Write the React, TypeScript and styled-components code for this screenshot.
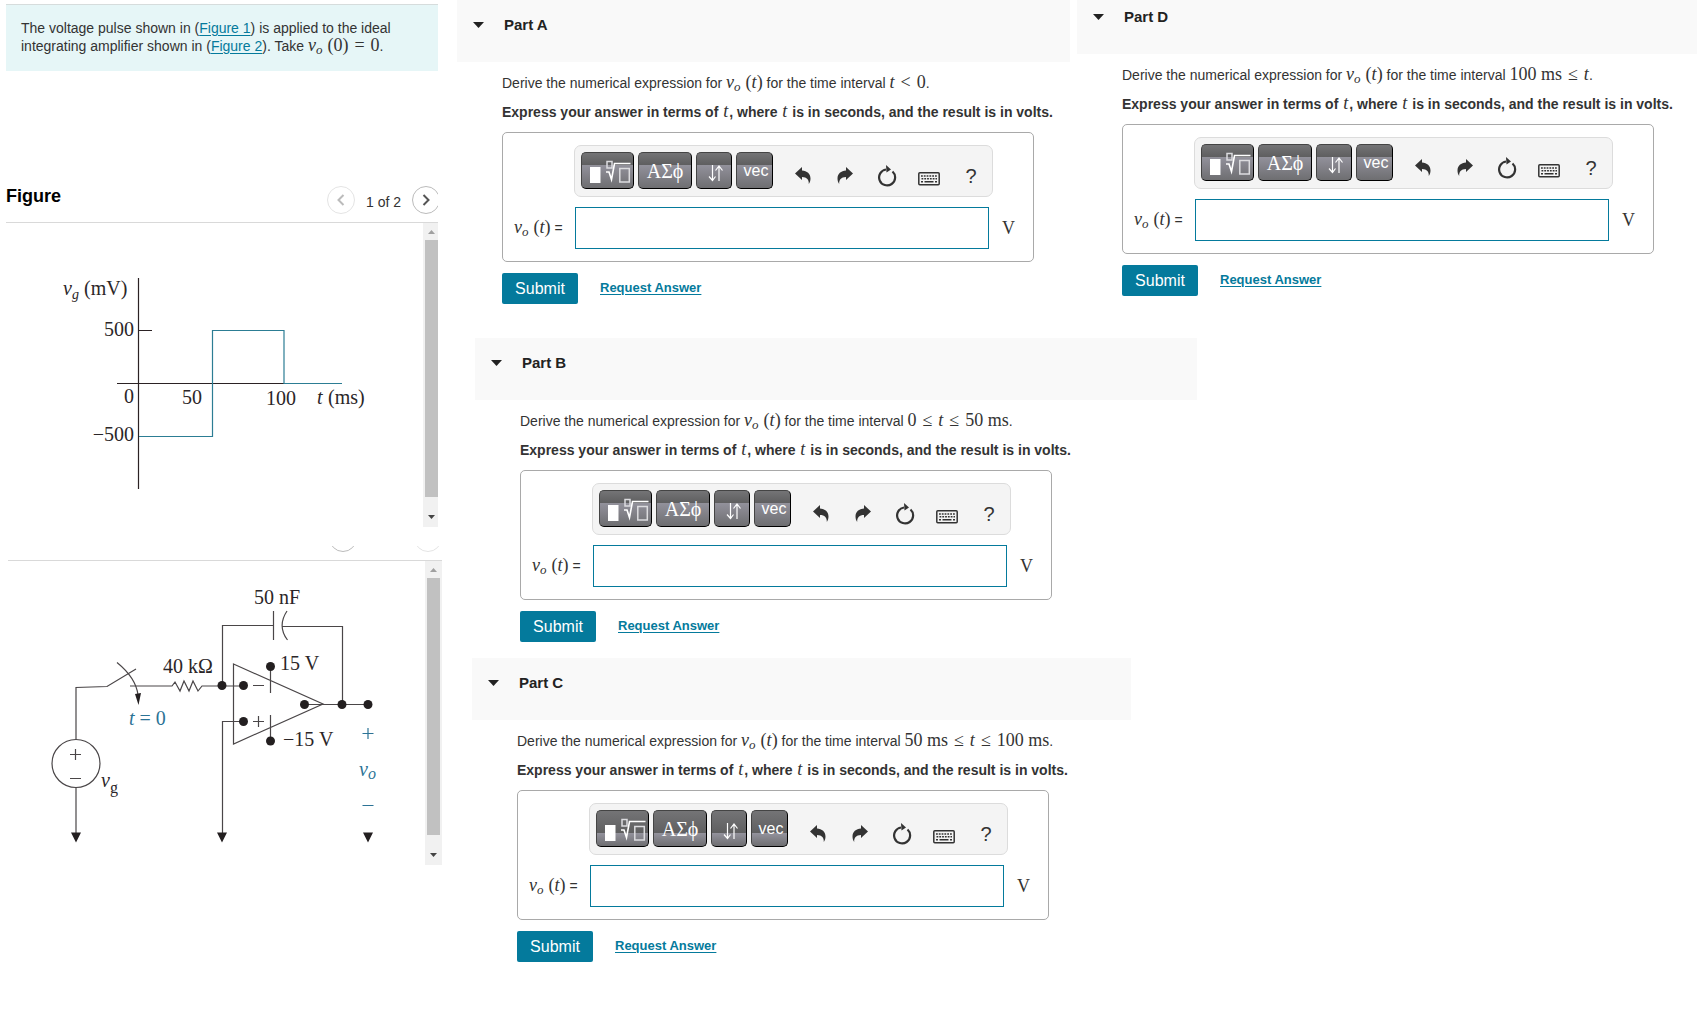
import React, { useId } from "react";
import styled, { createGlobalStyle } from "styled-components";

const sans = '"Liberation Sans", Arial, sans-serif';
const serif = '"Liberation Serif", "Times New Roman", serif';
const teal = "#047a9c";

const GlobalStyle = createGlobalStyle`
  *, *::before, *::after { box-sizing: border-box; }
  body { margin: 0; background: #fff; color: #333; font: 14px/18px ${sans}; }
  p, h1, h2 { margin: 0; }
`;

/* ---------- page ---------- */

const Page = styled.div`
  display: grid;
  grid-template-columns: 457px minmax(0, 1fr);
  align-items: start;
`;

const Sidebar = styled.aside`
  padding: 4px 15px 0 6px;
`;

const Parts = styled.main`
  display: grid;
  row-gap: 16px;
`;

const TopRow = styled.div`
  display: grid;
  grid-template-columns: minmax(0, 613fr) minmax(0, 620fr);
  column-gap: 7px;
  padding-bottom: 18px;
`;

const Indented = styled.div<{ $indent: number; $max: number }>`
  margin-left: ${(p) => p.$indent}px;
  max-width: ${(p) => p.$max}px;
`;

/* ---------- math ---------- */

const MathText = styled.span`
  font: 18px/0 ${serif};
  white-space: nowrap;
`;

const Sub = styled.sub`
  font-size: 13px;
  line-height: 0;
  vertical-align: -3px;
`;

const Arg = styled.span`
  margin-left: 5px;
`;

const Rel = styled.span`
  margin: 0 6px;
`;

const Variable = styled.i`
  margin: 0 1px;
`;

const Vo = ({ of = <i>t</i> }: { of?: React.ReactNode }) => (
  <MathText>
    <i>v</i>
    <Sub><i>o</i></Sub>
    <Arg>({of})</Arg>
  </MathText>
);

const T = () => <MathText><Variable>t</Variable></MathText>;

/* ---------- sidebar ---------- */

const Intro = styled.section`
  width: 432px;
  height: 67px;
  padding: 14px 15px;
  border-top: 1px solid #d6dcdc;
  background: #e6f6f7;
`;

const FigureLink = styled.a`
  color: ${teal};
  text-underline-offset: 2px;
`;

const FigureHead = styled.header`
  display: flex;
  align-items: center;
  justify-content: space-between;
  width: 432px;
  margin-top: 115px;
  height: 28px;
  overflow: hidden;
`;

const FigureTitle = styled.h2`
  font: bold 18px/28px ${sans};
  padding-bottom: 8px;
  color: #000;
`;

const Pager = styled.div`
  display: flex;
  align-items: center;
  flex: none;
  margin-right: -2px;
`;

const PageCount = styled.span`
  width: 57px;
  padding-top: 3px;
  text-align: center;
`;

const RoundButton = styled.button<{ $faint?: boolean }>`
  display: grid;
  place-items: center;
  width: 28px;
  height: 28px;
  padding: 0;
  border: 1px solid ${(p) => (p.$faint ? "#e4e4e4" : "#bbb")};
  border-radius: 50%;
  background: #fff;
  color: ${(p) => (p.$faint ? "#bbb" : "#555")};
`;

const PagerEdge = styled.div`
  display: flex;
  align-items: flex-end;
  justify-content: flex-end;
  gap: 57px;
  width: 436px;
  height: 6px;
  margin-top: 19px;
  overflow: hidden;
`;

const FigureFrame = styled.div<{ $wide?: boolean }>`
  display: flex;
  justify-content: space-between;
  width: ${(p) => (p.$wide ? 434 : 432)}px;
  margin: ${(p) => (p.$wide ? "8px 0 0 2px" : "8px 0 0")};
  border-top: 1px solid #d9d9d9;
`;

const Drawing = styled.svg`
  display: block;
  width: 417px;
  height: 304px;
  font: 20px ${serif};
  fill: #2b2628;
`;

const Track = styled.div<{ $wide?: boolean }>`
  display: flex;
  flex-direction: column;
  width: ${(p) => (p.$wide ? 17 : 15)}px;
  background: #f1f1f1;
`;

const TrackArrow = styled.svg`
  display: block;
  width: 17px;
  height: 17px;
`;

const Thumb = styled.div<{ $wide?: boolean }>`
  height: 257px;
  margin: 0 ${(p) => (p.$wide ? 2 : 0)}px 13px 2px;
  background: #c1c1c1;
`;

const Scrollbar = ({ wide }: { wide?: boolean }) => (
  <Track $wide={wide} aria-hidden="true">
    <TrackArrow viewBox="0 0 17 17"><path d="M5 11h7L8.500 7z" fill="#a0a0a0" /></TrackArrow>
    <Thumb $wide={wide} />
    <TrackArrow viewBox="0 0 17 17"><path d="M5 5h7L8.500 9z" fill="#444" /></TrackArrow>
  </Track>
);

const Chevron = ({ left }: { left?: boolean }) => (
  <svg width="8" height="12" viewBox="0 0 8 12" fill="none" stroke="currentColor" strokeWidth="2">
    <path d={left ? "M6.500 1 1.500 6l5 5" : "M1.500 1l5 5-5 5"} />
  </svg>
);

const PulseDrawing = () => (
  <Drawing viewBox="6 223 417 304" role="img" aria-label="Voltage pulse">
    <g fill="none" stroke="#2b2224">
      <path d="M138.500 278V489M117 383.500H284M139 330.500H152" strokeWidth="1.200" />
      <path d="M139 436.500H212.500V330.500H284V383.500H342" stroke="#2c7d94" strokeWidth="1.200" />
    </g>
    <text x="63" y="295" fontStyle="italic">v</text>
    <text x="72" y="299" fontStyle="italic" fontSize="14">g</text>
    <text x="84" y="295">(mV)</text>
    <text x="134" y="336" textAnchor="end">500</text>
    <text x="134" y="403" textAnchor="end">0</text>
    <text x="182" y="404">50</text>
    <text x="266" y="405">100</text>
    <text x="317" y="404" fontStyle="italic">t</text>
    <text x="328" y="404">(ms)</text>
    <text x="134" y="441" textAnchor="end">−500</text>
  </Drawing>
);

const CircuitDrawing = () => (
  <Drawing viewBox="8 561 417 304" role="img" aria-label="Integrating amplifier">
    <g fill="none" stroke="#4a4648" strokeWidth="1.200">
      <path d="M76 739.500V687.500L107 686.500 136 669" />
      <path d="M117 662.500Q136 678 138 695" />
      <path d="M130 686H172l3-4 5 9 4-10 5 10 4-10 5 10 4-5H222" />
      <path d="M222.500 686V625.500H273M273.500 611V640M287 611Q277 626 287.500 640M282 626.500H342.500V704" />
      <path d="M233.500 664 323 704 233.500 744ZM222 686H243M270.500 666V693M270.500 715V741M304 704.500H368" />
      <path d="M243 721.500H222.500V834M76 787V834" />
      <circle cx="76" cy="763.500" r="24" />
      <path d="M70 754.500h11M75.500 749v11M70 778.500h11M253 685.500h11M253 721.500h11M258.500 716v11" />
      <path d="M362.500 733.500h11M368 728v11M362.500 805.500h11" stroke="#2c7396" />
    </g>
    <g fill="#231f20">
      <circle cx="222" cy="685.500" r="4.500" />
      <circle cx="243.500" cy="685.500" r="4.500" />
      <circle cx="243.500" cy="721.500" r="4.500" />
      <circle cx="270.500" cy="666.500" r="4.500" />
      <circle cx="270.500" cy="741" r="4.500" />
      <circle cx="304.500" cy="704.500" r="4.500" />
      <circle cx="342" cy="704.500" r="4.500" />
      <circle cx="368" cy="704.500" r="4.500" />
      <path d="M71 832.500h10l-5 10zM217 832.500h10l-5 10zM363 832.500h10l-5 10zM135 694l6-1-2.500 12z" />
    </g>
    <text x="254" y="604">50 nF</text>
    <text x="163" y="673">40 kΩ</text>
    <text x="280" y="670">15 V</text>
    <text x="283" y="746">−15 V</text>
    <text x="101" y="787" fontStyle="italic">v</text>
    <text x="110" y="793" fontSize="16">g</text>
    <g fill="#2c7396">
      <text x="129" y="725"><tspan fontStyle="italic">t</tspan> = 0</text>
      <text x="359" y="776" fontStyle="italic">v</text>
      <text x="368" y="779" fontStyle="italic" fontSize="16">o</text>
    </g>
  </Drawing>
);

/* ---------- question part ---------- */

const PartHead = styled.header<{ $raised?: boolean }>`
  display: flex;
  align-items: center;
  gap: 20px;
  padding: ${(p) => (p.$raised ? 8 : 16)}px 16px 28px;
  background: #f9f9f9;
`;

const PartTitle = styled.h2`
  font: bold 15px/18px ${sans};
  color: #222;
`;

const PartBody = styled.div`
  padding: 11px 0 0 45px;
`;

const Prompt = styled.p<{ $strong?: boolean }>`
  font-weight: ${(p) => (p.$strong ? "bold" : "normal")};
  line-height: 20px;
  margin-bottom: ${(p) => (p.$strong ? 10 : 9)}px;
  white-space: nowrap;
`;

const AnswerBox = styled.div`
  display: grid;
  grid-template-columns: 61px minmax(0, 1fr) 44px;
  row-gap: 10px;
  align-items: center;
  max-width: 532px;
  padding: 12px 0 12px 11px;
  border: 1px solid #a9a9a9;
  border-radius: 5px;
`;

const Toolbar = styled.div`
  grid-column: 2 / 4;
  display: flex;
  gap: 4px;
  width: 419px;
  height: 52px;
  margin-left: -1px;
  padding: 6px 0 0 6px;
  border: 1px solid #dcdcdc;
  border-radius: 7px;
  background: #f4f4f4;
`;

const KeyButton = styled.button<{ $width: number; $split: number; $serif?: boolean; $inset?: number }>`
  display: grid;
  place-items: center;
  width: ${(p) => p.$width}px;
  height: 37px;
  padding: 0 0 0 ${(p) => p.$inset ?? 0}px;
  border: 1px solid #000;
  border-top-color: #444;
  border-left-color: #444;
  border-radius: 5px;
  background: linear-gradient(#747476, #5f5f60 ${(p) => p.$split}%, #93929c ${(p) => p.$split}%, #6e6e71);
  color: #fff;
  font: ${(p) => (p.$serif ? `20px/30px ${serif}` : `16px/30px ${sans}`)};
`;

const Tools = styled.div`
  display: flex;
  margin-left: 5px;
  padding-top: 5px;
`;

const ToolButton = styled.button`
  display: grid;
  place-items: center;
  width: 42px;
  height: 37px;
  padding: 0;
  border: 0;
  background: none;
  color: #333;
  font: 20px/24px ${sans};
`;

const FieldLabel = styled.label`
  white-space: nowrap;
`;

const Field = styled.input`
  width: 100%;
  height: 42px;
  border: 1px solid ${teal};
  border-radius: 0;
  background: #fff;
  font: 18px ${serif};
`;

const Unit = styled.span`
  padding-left: 13px;
  font: 18px/20px ${serif};
`;

const Actions = styled.div`
  display: flex;
  align-items: center;
  gap: 22px;
  margin-top: 11px;
`;

const Submit = styled.button`
  width: 76px;
  height: 31px;
  padding: 0;
  border: 0;
  border-radius: 2px;
  background: ${teal};
  color: #fff;
  font: 16px/20px ${sans};
`;

const RequestLink = styled.a`
  padding-bottom: 2px;
  color: ${teal};
  font-size: 13px;
  font-weight: bold;
  text-underline-offset: 2px;
`;

const TemplateIcon = () => (
  <svg width="51" height="35" viewBox="1 1 51 35" fill="none" stroke="#fff">
    <path d="M9 15h10.500v16H9z" fill="#fff" stroke="none" />
    <path d="M26 9.500h5v6.500h-5zM38.800 16.500h9.500v13.500h-9.500z" stroke="#dcdcdf" strokeWidth="1.500" />
    <path d="M25 20h3l2.500 7.500L33.500 11.500h16" strokeWidth="1.600" />
  </svg>
);

const UpDownIcon = () => (
  <svg width="34" height="35" viewBox="1 1 34 35" fill="none" stroke="#fff" strokeWidth="1.200">
    <path d="M16.500 13v15M13 24.500l3.500 4 3-4M23 29V14.500M19.500 18.500l3.500-4.500 3.500 4.500" />
  </svg>
);

const ArrowIcon = ({ flip }: { flip?: boolean }) => (
  <svg width="16" height="17" viewBox="0 0 16 17" fill="currentColor">
    <path
      transform={flip ? "matrix(-1 0 0 1 16 0)" : undefined}
      d="M0 6.500 7 0v3.500c5 .4 8.500 3.200 8.500 8 0 2-.6 4-1.700 5.500.3-4-1.800-7-6.800-7V13z"
    />
  </svg>
);

const ResetIcon = () => (
  <svg width="20" height="22" viewBox="0 0 20 22">
    <path d="M15.500 6.500A8 8 0 1 1 9 4.500" fill="none" stroke="currentColor" strokeWidth="2.200" />
    <path d="M9 0l5 4.500L9.500 7.500z" fill="currentColor" />
  </svg>
);

const KeyboardIcon = () => (
  <svg width="22" height="20" viewBox="0 0 22 20" fill="none" stroke="currentColor">
    <rect x=".8" y="6.800" width="20.400" height="12" rx="1" strokeWidth="1.500" />
    <path d="M3 10h16" strokeWidth="1.600" strokeDasharray="1.800 1" />
    <path d="M3.500 12.800h15.500" strokeWidth="1.600" strokeDasharray="1.800 1" />
    <path d="M3 15.800h2M6.500 15.800h9M17 15.800h2" strokeWidth="1.600" />
  </svg>
);

type PartProps = {
  name: string;
  interval: React.ReactNode;
  raised?: boolean;
  split?: number;
};

const Part = ({ name, interval, raised, split = 33 }: PartProps) => {
  const id = useId();
  return (
    <section>
      <PartHead $raised={raised}>
        <svg width="11" height="6" viewBox="0 0 11 6"><path d="M0 0h11L5.500 6z" fill="#222" /></svg>
        <PartTitle>{name}</PartTitle>
      </PartHead>
      <PartBody>
        <Prompt>
          Derive the numerical expression for <Vo /> for the time interval <MathText>{interval}</MathText>.
        </Prompt>
        <Prompt $strong>
          Express your answer in terms of <T />, where <T /> is in seconds, and the result is in volts.
        </Prompt>
        <AnswerBox>
          <Toolbar role="toolbar" aria-label="Equation tools">
            <KeyButton type="button" $width={53} $split={split} aria-label="Templates"><TemplateIcon /></KeyButton>
            <KeyButton type="button" $width={54} $split={split} $serif>ΑΣϕ</KeyButton>
            <KeyButton type="button" $width={36} $split={split} aria-label="Arrows"><UpDownIcon /></KeyButton>
            <KeyButton type="button" $width={37} $split={split} $inset={3}>vec</KeyButton>
            <Tools>
              <ToolButton type="button" aria-label="Undo"><ArrowIcon /></ToolButton>
              <ToolButton type="button" aria-label="Redo"><ArrowIcon flip /></ToolButton>
              <ToolButton type="button" aria-label="Reset"><ResetIcon /></ToolButton>
              <ToolButton type="button" aria-label="Keyboard shortcuts"><KeyboardIcon /></ToolButton>
              <ToolButton type="button">?</ToolButton>
            </Tools>
          </Toolbar>
          <FieldLabel htmlFor={id}><Vo /> =</FieldLabel>
          <Field id={id} type="text" />
          <Unit>V</Unit>
        </AnswerBox>
        <Actions>
          <Submit type="button">Submit</Submit>
          <RequestLink href="#request">Request Answer</RequestLink>
        </Actions>
      </PartBody>
    </section>
  );
};

export default function App() {
  return (
    <>
      <GlobalStyle />
      <Page>
        <Sidebar>
          <Intro>
            The voltage pulse shown in (<FigureLink href="#figure-1">Figure 1</FigureLink>) is applied to the ideal
            <br />
            integrating amplifier shown in (<FigureLink href="#figure-2">Figure 2</FigureLink>). Take{" "}
            <Vo of="0" />
            <MathText><Rel>=</Rel>0</MathText>.
          </Intro>
          <FigureHead>
            <FigureTitle>Figure</FigureTitle>
            <Pager>
              <RoundButton type="button" $faint aria-label="Previous figure"><Chevron left /></RoundButton>
              <PageCount>1 of 2</PageCount>
              <RoundButton type="button" aria-label="Next figure"><Chevron /></RoundButton>
            </Pager>
          </FigureHead>
          <FigureFrame id="figure-1">
            <PulseDrawing />
            <Scrollbar />
          </FigureFrame>
          <PagerEdge>
            <RoundButton type="button" aria-label="Previous figure" />
            <RoundButton type="button" $faint aria-label="Next figure" />
          </PagerEdge>
          <FigureFrame id="figure-2" $wide>
            <CircuitDrawing />
            <Scrollbar wide />
          </FigureFrame>
        </Sidebar>
        <Parts>
          <TopRow>
            <Part name="Part A" interval={<><i>t</i><Rel>&lt;</Rel>0</>} />
            <Part name="Part D" raised interval={<>100 ms<Rel>≤</Rel><i>t</i></>} />
          </TopRow>
          <Indented $indent={18} $max={722}>
            <Part name="Part B" interval={<>0<Rel>≤</Rel><i>t</i><Rel>≤</Rel>50 ms</>} />
          </Indented>
          <Indented $indent={15} $max={659}>
            <Part name="Part C" split={63} interval={<>50 ms<Rel>≤</Rel><i>t</i><Rel>≤</Rel>100 ms</>} />
          </Indented>
        </Parts>
      </Page>
    </>
  );
}
